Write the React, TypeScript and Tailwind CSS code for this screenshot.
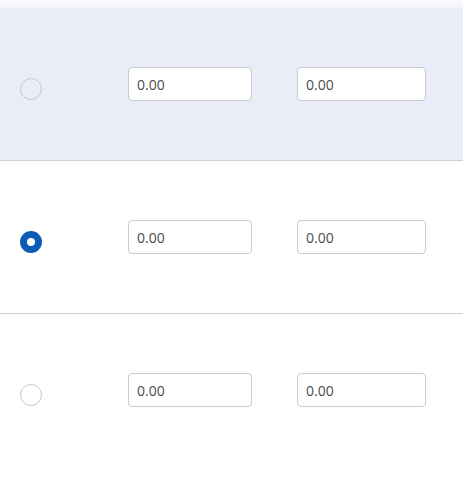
import React from "react";

function Radio({ checked }: { checked: boolean }) {
  return checked ? (
    <span className="mt-[9px] box-border block h-[22px] w-[22px] rounded-full border-[7px] border-[#0b5cb5] bg-white" />
  ) : (
    <span className="mt-[9px] box-border block h-[22px] w-[22px] rounded-full border-[1.5px] border-[#c6c8cb]" />
  );
}

function Field({ w }: { w: string }) {
  return (
    <div
      className={`box-border flex h-[34px] items-center rounded-[4px] border border-[#c9cbce] bg-white pl-[8px] text-[14px] text-[#4d4d4d] ${w}`}
    >
      0.00
    </div>
  );
}

function Row({ selected, highlight, last }: { selected: boolean; highlight: boolean; last?: boolean }) {
  return (
    <div
      className={`flex items-center ${last ? "h-[152px]" : "h-[153px] border-b border-[#cdcfd2]"} ${highlight ? "bg-[#e9edf8]" : "bg-white"}`}
    >
      <div className="ml-[20px] w-[108px]">
        <Radio checked={selected} />
      </div>
      <Field w="w-[124px]" />
      <div className="w-[45px]" />
      <Field w="w-[129px]" />
    </div>
  );
}

export default function App() {
  return (
    <div
      className="h-[504px] w-[474px] overflow-hidden bg-white"
      style={{ fontFamily: '"Open Sans", "Noto Sans", sans-serif' }}
    >
      <div className="w-[463px]">
        <div className="h-[8px] bg-gradient-to-b from-[#fbfbfd] to-[#f1f3f8]" />
        <Row selected={false} highlight={true} />
        <Row selected={true} highlight={false} />
        <Row selected={false} highlight={false} last />
      </div>
    </div>
  );
}
